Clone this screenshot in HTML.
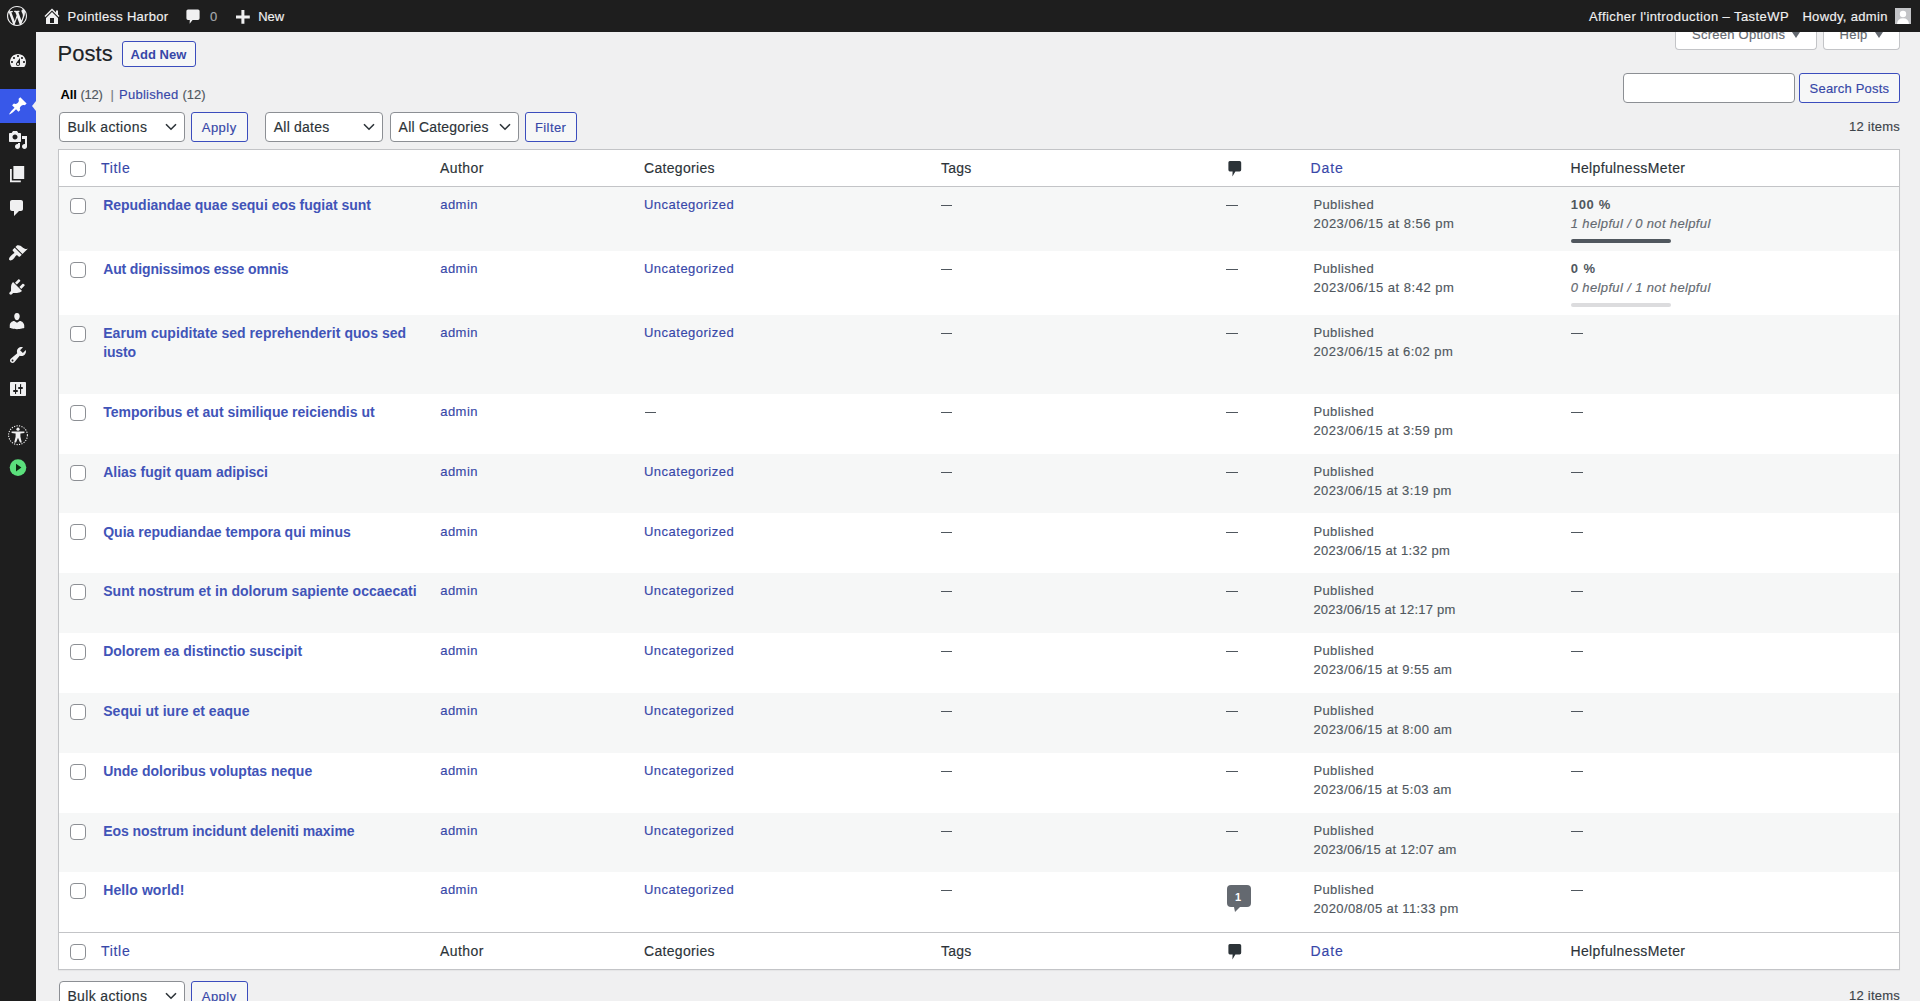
<!DOCTYPE html><html><head><meta charset="utf-8"><title>Posts</title><style>
html,body{margin:0;padding:0;width:1920px;height:1001px;overflow:hidden;background:#f0f0f1;font-family:"Liberation Sans",sans-serif}
span{white-space:pre;-webkit-text-stroke:0.15px currentColor}span.b{-webkit-text-stroke:0}
</style></head><body>
<div style="position:absolute;left:0;top:0;width:1920px;height:32px;background:#1e1e1e;z-index:5"></div>
<svg style="position:absolute;left:7px;top:6px;z-index:6" width="20" height="20" viewBox="0 0 20 20"><path fill="#f0f0f1" d="M20 10c0-5.51-4.49-10-10-10C4.48 0 0 4.49 0 10c0 5.52 4.48 10 10 10 5.51 0 10-4.48 10-10zM7.780 15.37L4.37 6.22c.55-.02 1.170-.08 1.17-.08.5-.06.44-1.13-.06-1.11 0 0-1.45.11-2.37.11-.18 0-.37 0-.58-.01C4.12 2.69 6.87 1.11 10 1.11c2.33 0 4.45.87 6.05 2.34-.68-.11-1.65.39-1.65 1.58 0 .74.45 1.36.9 2.1.35.61.55 1.36.55 2.46 0 1.49-1.4 5-1.4 5l-3.03-8.37c.54-.02.82-.17.82-.17.5-.05.44-1.25-.06-1.22 0 0-1.44.12-2.38.12-.87 0-2.33-.12-2.33-.12-.5-.03-.56 1.2-.06 1.22l.92.08 1.26 3.41zM17.410 10c.24-.64.74-1.87.43-4.25.7 1.29 1.05 2.71 1.05 4.25 0 3.29-1.73 6.24-4.4 7.78.97-2.59 1.94-5.2 2.92-7.780zM6.1 18.09C3.12 16.65 1.11 13.53 1.11 10c0-1.3.23-2.48.72-3.59C3.25 10.3 4.67 14.2 6.1 18.09zm4.03-6.63l2.58 6.98c-.86.29-1.76.45-2.71.45-.79 0-1.57-.11-2.29-.33.81-2.38 1.62-4.74 2.42-7.1z"/></svg>
<svg style="position:absolute;left:42px;top:6.1px;z-index:6" width="20" height="20" viewBox="0 0 20 20"><path fill="#f0f0f1" d="M16 8.5l1.53 1.53-1.06 1.06L10 4.62l-6.47 6.47-1.06-1.06L10 2.5l4 4v-2h2v4zm-6-2.46l6 5.99V18H4v-5.97zM12 17v-5H8v5h4z"/></svg>
<svg style="position:absolute;left:186px;top:9px;z-index:6" width="14" height="16" viewBox="0 0 14 16">
<path fill="#f0f0f1" d="M2 0.5 H12 Q13.6 0.5 13.6 2.1 V9.3 Q13.6 10.9 12 10.9 H6.6 L3.6 14.8 L3.8 10.9 H2 Q0.4 10.9 0.4 9.3 V2.1 Q0.4 0.5 2 0.5 Z"/>
</svg>
<svg style="position:absolute;left:236px;top:10px;z-index:6" width="14" height="14" viewBox="0 0 14 14">
<path fill="#f0f0f1" d="M5.4 0 H8.4 V5.4 H13.8 V8.4 H8.4 V13.8 H5.4 V8.4 H0 V5.4 H5.4 Z"/>
</svg>
<svg style="position:absolute;left:1895px;top:8px;z-index:6" width="16" height="16" viewBox="0 0 16 16">
<rect width="16" height="16" fill="#c3c4c7"/>
<circle cx="8" cy="6" r="3.2" fill="#fff"/>
<path fill="#fff" d="M2 16 Q2.5 10.2 8 10.2 Q13.5 10.2 14 16 Z"/>
</svg>
<div style="position:absolute;left:0;top:32px;width:36px;height:969px;background:#1e1e1e"></div>
<div style="position:absolute;left:0;top:89px;width:36px;height:34px;background:#3858e9"></div>
<div style="position:absolute;left:32px;top:101px;width:0;height:0;border-top:5px solid transparent;border-bottom:5px solid transparent;border-right:4px solid #f0f0f1"></div>
<svg style="position:absolute;left:7.6px;top:50.8px" width="20" height="20" viewBox="0 0 20 20"><path fill="#f0f0f1" d="M3.76 16h12.48c1.1-1.37 1.76-3.11 1.76-5 0-4.42-3.58-8-8-8s-8 3.58-8 8c0 1.89.66 3.63 1.76 5zM10 4c.55 0 1 .45 1 1s-.45 1-1 1-1-.45-1-1 .45-1 1-1zM6 6c.55 0 1 .45 1 1s-.45 1-1 1-1-.45-1-1 .45-1 1-1zm8 0c.55 0 1 .45 1 1s-.45 1-1 1-1-.45-1-1 .45-1 1-1zm-5.37 5.55L12 7v6c0 1.1-.9 2-2 2s-2-.9-2-2c0-.57.24-1.08.63-1.45zM4 10c.55 0 1 .45 1 1s-.45 1-1 1-1-.45-1-1 .45-1 1-1zm12 0c.55 0 1 .45 1 1s-.45 1-1 1-1-.45-1-1 .45-1 1-1zm-5 3c0-.55-.45-1-1-1s-1 .45-1 1 .45 1 1 1 1-.45 1-1z"/></svg><svg style="position:absolute;left:7.8px;top:96px" width="20" height="20" viewBox="0 0 20 20"><path fill="#fff" d="M10.44 3.02l1.82-1.82 6.36 6.35-1.83 1.82c-1.05-.68-2.48-.57-3.41.36l-.75.75c-.92.93-1.040 2.35-.35 3.41l-1.83 1.82-2.41-2.41-2.8 2.79c-.42.42-3.38 2.71-3.8 2.29s1.86-3.39 2.28-3.810l2.79-2.79L4.1 9.36l1.83-1.82c1.05.69 2.48.57 3.4-.36l.75-.75c.93-.92 1.05-2.35.36-3.41z"/></svg><svg style="position:absolute;left:7.6px;top:129.8px" width="20" height="20" viewBox="0 0 20 20"><path fill="#f0f0f1" d="M13 11V4c0-.55-.45-1-1-1h-1.67L9 1H5L3.67 3H2c-.55 0-1 .45-1 1v7c0 .55.45 1 1 1h10c.55 0 1-.45 1-1zM7 4.5c1.38 0 2.5 1.12 2.5 2.5S8.38 9.5 7 9.5 4.5 8.38 4.5 7 5.62 4.5 7 4.5zM14 6h5v10.5c0 1.38-1.12 2.5-2.5 2.5S14 17.88 14 16.5s1.120-2.5 2.5-2.5c.17 0 .34.02.5.05V9h-3V6zm-4 8.05V13h2v3.5c0 1.38-1.12 2.5-2.5 2.5S7 17.88 7 16.5 8.12 14 9.5 14c.17 0 .34.02.5.05z"/></svg><svg style="position:absolute;left:0;top:160px" width="36" height="30" viewBox="0 160 36 30"><path fill="#f0f0f1" d="M13.4 166 H24.2 V179 H13.4 Z M10 169 H11.8 V180.4 H20.8 V182.2 H10 Z"/></svg><svg style="position:absolute;left:7.2px;top:198px" width="20" height="20" viewBox="0 0 20 20"><path fill="#f0f0f1" d="M5 2h9c1.1 0 2 .9 2 2v7c0 1.1-.9 2-2 2h-2l-5 5v-5H5c-1.1 0-2-.9-2-2V4c0-1.1.9-2 2-2z"/></svg><svg style="position:absolute;left:7.5px;top:242.8px" width="20" height="20" viewBox="0 0 20 20"><path fill="#f0f0f1" d="M14.48 11.06L7.41 3.99l1.5-1.5c.5-.56 2.3-.47 3.51.32 1.21.8 1.43 1.28 2.91 2.1 1.18.64 2.45 1.26 4.450.85zm-.71.71L6.7 4.7 4.93 6.47c-.39.39-.39 1.02 0 1.41l1.06 1.06c.39.39.39 1.03 0 1.42-.6.6-1.43 1.11-2.21 1.69-.35.26-.7.53-1.01.84C1.43 14.23.4 16.08 1.4 17.07c.99 1 2.84-.03 4.18-1.36.31-.31.58-.66.85-1.02.57-.78 1.08-1.61 1.69-2.210.39-.39 1.02-.39 1.41 0l1.06 1.06c.39.39 1.02.39 1.41 0z"/></svg><svg style="position:absolute;left:7.4px;top:276.8px" width="20" height="20" viewBox="0 0 20 20"><path fill="#f0f0f1" d="M13.11 4.36L9.87 7.6 8 5.73l3.24-3.24c.35-.34 1.05-.2 1.56.32.52.51.66 1.21.31 1.55zm-8 1.77l.91-1.12 9.01 9.01-1.19.84c-.71.71-2.63 1.160-3.82 1.16H6.14L4.9 17.26c-.59.59-1.54.59-2.12 0-.59-.58-.59-1.53 0-2.12l1.24-1.24v-3.88c0-1.13.4-3.19 1.09-3.89zm7.26 3.97l3.24-3.24c.34-.35 1.04-.21 1.55.31.52.51.66 1.21.31 1.55l-3.24 3.25z"/></svg><svg style="position:absolute;left:7.3px;top:311px" width="20" height="20" viewBox="0 0 20 20"><path fill="#f0f0f1" d="M10 9.25c-2.27 0-2.73-3.44-2.73-3.44C7 4.02 7.82 2 9.97 2c2.16 0 2.98 2.02 2.71 3.81 0 0-.41 3.44-2.68 3.44zm0 2.57L12.72 10c2.39 0 4.52 2.33 4.52 4.53v2.49s-3.65 1.13-7.24 1.13c-3.65 0-7.24-1.13-7.24-1.13v-2.49c0-2.25 1.94-4.48 4.47-4.48z"/></svg><svg style="position:absolute;left:7.6px;top:345px" width="20" height="20" viewBox="0 0 20 20"><path fill="#f0f0f1" d="M16.68 9.77c-1.34 1.34-3.3 1.67-4.95.99l-5.41 6.52c-.99.99-2.59.99-3.58 0s-.99-2.59 0-3.57l6.52-5.42c-.68-1.65-.35-3.61.99-4.95 1.28-1.28 3.12-1.62 4.72-1.06l-2.89 2.89 2.82 2.82 2.86-2.87c.53 1.58.18 3.39-1.08 4.65zM3.81 16.21c.4.39 1.04.39 1.43 0 .4-.4.4-1.04 0-1.43-.39-.4-1.030-.4-1.43 0-.39.39-.39 1.03 0 1.43z"/></svg><svg style="position:absolute;left:7.9px;top:379px" width="20" height="20" viewBox="0 0 20 20"><rect x="2" y="3" width="16" height="14" rx="0.8" fill="#f0f0f1"/><g fill="#1e1e1e"><rect x="7" y="5" width="1.1" height="10" rx="0.5"/><rect x="12" y="5" width="1.1" height="10" rx="0.5"/><rect x="5" y="11" width="5" height="2" rx="1"/><rect x="10" y="8" width="5" height="2" rx="1"/></g></svg><svg style="position:absolute;left:0;top:418px" width="36" height="66" viewBox="0 418 36 66">
 <circle cx="18" cy="435.2" r="9.4" fill="none" stroke="#f0f0f1" stroke-width="1.1" stroke-dasharray="1.2 1.3"/>
 <circle cx="18" cy="429.2" r="1.6" fill="#f0f0f1"/>
 <path fill="#f0f0f1" d="M11.6 431.4 H24.4 V433 L20.4 433.6 L20.4 436.8 L21.8 442.4 L20 442.4 L18 437.8 L16 442.4 L14.2 442.4 L15.6 436.8 L15.6 433.6 L11.6 433 Z"/>
 <circle cx="18" cy="467.6" r="8.3" fill="#5be07c"/>
 <path fill="#0d2a12" d="M16 463.8 L21.4 467.6 L16 471.4 Z"/>
</svg>
<div style="position:absolute;left:122px;top:41px;width:74px;height:26px;box-sizing:border-box;border:1px solid #3b4dbd;border-radius:3px;background:#f6f7f7"></div>
<div style="position:absolute;left:1675px;top:20px;width:142px;height:30px;box-sizing:border-box;border:1px solid #c3c4c7;border-top:none;border-radius:0 0 4px 4px;background:#fff"></div>
<div style="position:absolute;left:1823px;top:20px;width:77px;height:30px;box-sizing:border-box;border:1px solid #c3c4c7;border-top:none;border-radius:0 0 4px 4px;background:#fff"></div>
<div style="position:absolute;left:1792px;top:32px;width:0;height:0;border-left:4px solid transparent;border-right:4px solid transparent;border-top:6px solid #646970"></div>
<div style="position:absolute;left:1875px;top:32px;width:0;height:0;border-left:4px solid transparent;border-right:4px solid transparent;border-top:6px solid #646970"></div>
<div style="position:absolute;left:1623px;top:73px;width:172px;height:30px;box-sizing:border-box;border:1px solid #8c8f94;border-radius:4px;background:#fff"></div>
<div style="position:absolute;left:1799px;top:73px;width:101px;height:30px;box-sizing:border-box;border:1px solid #3b4dbd;border-radius:3px;background:#f6f7f7"></div>
<div style="position:absolute;left:59px;top:112px;width:126px;height:30px;box-sizing:border-box;border:1px solid #8c8f94;border-radius:4px;background:#fff"></div>
<svg style="position:absolute;left:165px;top:123px" width="12" height="8" viewBox="0 0 12 8"><path d="M1 1.2 L6 6.2 L11 1.2" fill="none" stroke="#2c3338" stroke-width="1.6"/></svg>
<div style="position:absolute;left:191px;top:112px;width:57px;height:30px;box-sizing:border-box;border:1px solid #3b4dbd;border-radius:3px;background:#f6f7f7"></div>
<div style="position:absolute;left:265px;top:112px;width:118px;height:30px;box-sizing:border-box;border:1px solid #8c8f94;border-radius:4px;background:#fff"></div>
<svg style="position:absolute;left:363px;top:123px" width="12" height="8" viewBox="0 0 12 8"><path d="M1 1.2 L6 6.2 L11 1.2" fill="none" stroke="#2c3338" stroke-width="1.6"/></svg>
<div style="position:absolute;left:390px;top:112px;width:129px;height:30px;box-sizing:border-box;border:1px solid #8c8f94;border-radius:4px;background:#fff"></div>
<svg style="position:absolute;left:499px;top:123px" width="12" height="8" viewBox="0 0 12 8"><path d="M1 1.2 L6 6.2 L11 1.2" fill="none" stroke="#2c3338" stroke-width="1.6"/></svg>
<div style="position:absolute;left:525px;top:112px;width:52px;height:30px;box-sizing:border-box;border:1px solid #3b4dbd;border-radius:3px;background:#f6f7f7"></div>
<div style="position:absolute;left:58px;top:149px;width:1842px;height:821px;box-sizing:border-box;border:1px solid #c3c4c7;background:#fff;box-shadow:0 1px 1px rgba(0,0,0,.04)"></div>
<div style="position:absolute;left:59px;top:186px;width:1840px;height:1px;background:#c3c4c7"></div>
<div style="position:absolute;left:59px;top:932px;width:1840px;height:1px;background:#c3c4c7"></div>
<div style="position:absolute;left:70px;top:161px;width:16px;height:16px;box-sizing:border-box;border:1px solid #8c8f94;border-radius:4px;background:#fff"></div>
<svg style="position:absolute;left:1228px;top:160px" width="14" height="17" viewBox="0 0 14 17"><path fill="#2c3338" d="M1.8 1 H11.6 Q13.2 1 13.2 2.6 V9.8 Q13.2 11.4 11.6 11.4 H7.4 L4.4 16.6 L4.6 11.4 H1.8 Q0.4 11.4 0.4 9.8 V2.6 Q0.4 1 1.8 1 Z"/></svg>
<div style="position:absolute;left:70px;top:944px;width:16px;height:16px;box-sizing:border-box;border:1px solid #8c8f94;border-radius:4px;background:#fff"></div>
<svg style="position:absolute;left:1228px;top:943px" width="14" height="17" viewBox="0 0 14 17"><path fill="#2c3338" d="M1.8 1 H11.6 Q13.2 1 13.2 2.6 V9.8 Q13.2 11.4 11.6 11.4 H7.4 L4.4 16.6 L4.6 11.4 H1.8 Q0.4 11.4 0.4 9.8 V2.6 Q0.4 1 1.8 1 Z"/></svg>
<div style="position:absolute;left:59px;top:187px;width:1840px;height:64px;background:#f6f7f7"></div>
<div style="position:absolute;left:70px;top:198px;width:16px;height:16px;box-sizing:border-box;border:1px solid #8c8f94;border-radius:4px;background:#fff"></div>
<div style="position:absolute;left:940.6px;top:204.6px;width:11.4px;height:1.2px;background:#50575e"></div>
<div style="position:absolute;left:1226.4px;top:204.6px;width:11.4px;height:1.2px;background:#50575e"></div>
<div style="position:absolute;left:1571px;top:239px;width:100px;height:4px;border-radius:2px;background:#50575e"></div>
<div style="position:absolute;left:70px;top:262px;width:16px;height:16px;box-sizing:border-box;border:1px solid #8c8f94;border-radius:4px;background:#fff"></div>
<div style="position:absolute;left:940.6px;top:268.6px;width:11.4px;height:1.2px;background:#50575e"></div>
<div style="position:absolute;left:1226.4px;top:268.6px;width:11.4px;height:1.2px;background:#50575e"></div>
<div style="position:absolute;left:1571px;top:303px;width:100px;height:4px;border-radius:2px;background:#dcdcde"></div>
<div style="position:absolute;left:59px;top:315px;width:1840px;height:79px;background:#f6f7f7"></div>
<div style="position:absolute;left:70px;top:326px;width:16px;height:16px;box-sizing:border-box;border:1px solid #8c8f94;border-radius:4px;background:#fff"></div>
<div style="position:absolute;left:940.6px;top:332.6px;width:11.4px;height:1.2px;background:#50575e"></div>
<div style="position:absolute;left:1226.4px;top:332.6px;width:11.4px;height:1.2px;background:#50575e"></div>
<div style="position:absolute;left:1571.4px;top:332.6px;width:11.4px;height:1.2px;background:#50575e"></div>
<div style="position:absolute;left:70px;top:405px;width:16px;height:16px;box-sizing:border-box;border:1px solid #8c8f94;border-radius:4px;background:#fff"></div>
<div style="position:absolute;left:645px;top:411.6px;width:11.4px;height:1.2px;background:#50575e"></div>
<div style="position:absolute;left:940.6px;top:411.6px;width:11.4px;height:1.2px;background:#50575e"></div>
<div style="position:absolute;left:1226.4px;top:411.6px;width:11.4px;height:1.2px;background:#50575e"></div>
<div style="position:absolute;left:1571.4px;top:411.6px;width:11.4px;height:1.2px;background:#50575e"></div>
<div style="position:absolute;left:59px;top:454px;width:1840px;height:59px;background:#f6f7f7"></div>
<div style="position:absolute;left:70px;top:465px;width:16px;height:16px;box-sizing:border-box;border:1px solid #8c8f94;border-radius:4px;background:#fff"></div>
<div style="position:absolute;left:940.6px;top:471.6px;width:11.4px;height:1.2px;background:#50575e"></div>
<div style="position:absolute;left:1226.4px;top:471.6px;width:11.4px;height:1.2px;background:#50575e"></div>
<div style="position:absolute;left:1571.4px;top:471.6px;width:11.4px;height:1.2px;background:#50575e"></div>
<div style="position:absolute;left:70px;top:524px;width:16px;height:16px;box-sizing:border-box;border:1px solid #8c8f94;border-radius:4px;background:#fff"></div>
<div style="position:absolute;left:940.6px;top:531.6px;width:11.4px;height:1.2px;background:#50575e"></div>
<div style="position:absolute;left:1226.4px;top:531.6px;width:11.4px;height:1.2px;background:#50575e"></div>
<div style="position:absolute;left:1571.4px;top:531.6px;width:11.4px;height:1.2px;background:#50575e"></div>
<div style="position:absolute;left:59px;top:573px;width:1840px;height:60px;background:#f6f7f7"></div>
<div style="position:absolute;left:70px;top:584px;width:16px;height:16px;box-sizing:border-box;border:1px solid #8c8f94;border-radius:4px;background:#fff"></div>
<div style="position:absolute;left:940.6px;top:591.1px;width:11.4px;height:1.2px;background:#50575e"></div>
<div style="position:absolute;left:1226.4px;top:591.1px;width:11.4px;height:1.2px;background:#50575e"></div>
<div style="position:absolute;left:1571.4px;top:591.1px;width:11.4px;height:1.2px;background:#50575e"></div>
<div style="position:absolute;left:70px;top:644px;width:16px;height:16px;box-sizing:border-box;border:1px solid #8c8f94;border-radius:4px;background:#fff"></div>
<div style="position:absolute;left:940.6px;top:651.1px;width:11.4px;height:1.2px;background:#50575e"></div>
<div style="position:absolute;left:1226.4px;top:651.1px;width:11.4px;height:1.2px;background:#50575e"></div>
<div style="position:absolute;left:1571.4px;top:651.1px;width:11.4px;height:1.2px;background:#50575e"></div>
<div style="position:absolute;left:59px;top:693px;width:1840px;height:60px;background:#f6f7f7"></div>
<div style="position:absolute;left:70px;top:704px;width:16px;height:16px;box-sizing:border-box;border:1px solid #8c8f94;border-radius:4px;background:#fff"></div>
<div style="position:absolute;left:940.6px;top:710.6px;width:11.4px;height:1.2px;background:#50575e"></div>
<div style="position:absolute;left:1226.4px;top:710.6px;width:11.4px;height:1.2px;background:#50575e"></div>
<div style="position:absolute;left:1571.4px;top:710.6px;width:11.4px;height:1.2px;background:#50575e"></div>
<div style="position:absolute;left:70px;top:764px;width:16px;height:16px;box-sizing:border-box;border:1px solid #8c8f94;border-radius:4px;background:#fff"></div>
<div style="position:absolute;left:940.6px;top:771.1px;width:11.4px;height:1.2px;background:#50575e"></div>
<div style="position:absolute;left:1226.4px;top:771.1px;width:11.4px;height:1.2px;background:#50575e"></div>
<div style="position:absolute;left:1571.4px;top:771.1px;width:11.4px;height:1.2px;background:#50575e"></div>
<div style="position:absolute;left:59px;top:813px;width:1840px;height:59px;background:#f6f7f7"></div>
<div style="position:absolute;left:70px;top:824px;width:16px;height:16px;box-sizing:border-box;border:1px solid #8c8f94;border-radius:4px;background:#fff"></div>
<div style="position:absolute;left:940.6px;top:831.1px;width:11.4px;height:1.2px;background:#50575e"></div>
<div style="position:absolute;left:1226.4px;top:831.1px;width:11.4px;height:1.2px;background:#50575e"></div>
<div style="position:absolute;left:1571.4px;top:831.1px;width:11.4px;height:1.2px;background:#50575e"></div>
<div style="position:absolute;left:70px;top:883px;width:16px;height:16px;box-sizing:border-box;border:1px solid #8c8f94;border-radius:4px;background:#fff"></div>
<div style="position:absolute;left:940.6px;top:890.1px;width:11.4px;height:1.2px;background:#50575e"></div>
<div style="position:absolute;left:1227px;top:885.0px;width:24px;height:22px;background:#646970;border-radius:4px"></div>
<div style="position:absolute;left:1234px;top:907.0px;width:0;height:0;border-top:5px solid #646970;border-left:1px solid transparent;border-right:5px solid transparent"></div>
<div style="position:absolute;left:1571.4px;top:890.1px;width:11.4px;height:1.2px;background:#50575e"></div>
<div style="position:absolute;left:59px;top:981px;width:126px;height:30px;box-sizing:border-box;border:1px solid #8c8f94;border-radius:4px;background:#fff"></div>
<svg style="position:absolute;left:165px;top:992px" width="12" height="8" viewBox="0 0 12 8"><path d="M1 1.2 L6 6.2 L11 1.2" fill="none" stroke="#2c3338" stroke-width="1.6"/></svg>
<div style="position:absolute;left:191px;top:981px;width:57px;height:30px;box-sizing:border-box;border:1px solid #3b4dbd;border-radius:3px;background:#f6f7f7"></div>
<span style="position:absolute;left:67.6px;top:7px;line-height:20px;font-size:13px;font-weight:400;font-style:normal;color:#f0f0f1;letter-spacing:0.296px;z-index:6">Pointless Harbor</span>
<span style="position:absolute;left:210px;top:7px;line-height:20px;font-size:13px;font-weight:400;font-style:normal;color:#a7aaad;letter-spacing:0px;z-index:6">0</span>
<span style="position:absolute;left:258.2px;top:7px;line-height:20px;font-size:13px;font-weight:400;font-style:normal;color:#f0f0f1;letter-spacing:-0.078px;z-index:6">New</span>
<span style="position:absolute;left:1589px;top:7px;line-height:20px;font-size:13px;font-weight:400;font-style:normal;color:#f0f0f1;letter-spacing:0.416px;z-index:6">Afficher l&#x27;introduction – TasteWP</span>
<span style="position:absolute;left:1802.4px;top:7px;line-height:20px;font-size:13px;font-weight:400;font-style:normal;color:#f0f0f1;letter-spacing:0.332px;z-index:6">Howdy, admin</span>
<span style="position:absolute;left:57.4px;top:43.5px;line-height:20px;font-size:22px;font-weight:400;font-style:normal;color:#1d2327;letter-spacing:0.077px">Posts</span>
<span class=b style="position:absolute;left:130.5px;top:45px;line-height:20px;font-size:13px;font-weight:700;font-style:normal;color:#3747a8;letter-spacing:0.023px">Add New</span>
<span style="position:absolute;left:1692.0px;top:25px;line-height:20px;font-size:13px;font-weight:400;font-style:normal;color:#646970;letter-spacing:0.259px">Screen Options</span>
<span style="position:absolute;left:1839.6px;top:25px;line-height:20px;font-size:13px;font-weight:400;font-style:normal;color:#646970;letter-spacing:0.336px">Help</span>
<span class=b style="position:absolute;left:60.6px;top:85px;line-height:20px;font-size:13px;font-weight:700;font-style:normal;color:#000;letter-spacing:-0.233px">All</span>
<span style="position:absolute;left:80.4px;top:85px;line-height:20px;font-size:13px;font-weight:400;font-style:normal;color:#50575e;letter-spacing:-0.222px">(12)</span>
<span style="position:absolute;left:110.4px;top:85px;line-height:20px;font-size:13px;font-weight:400;font-style:normal;color:#787c82;letter-spacing:0px">|</span>
<span style="position:absolute;left:119px;top:85px;line-height:20px;font-size:13px;font-weight:400;font-style:normal;color:#3747a8;letter-spacing:0.268px">Published</span>
<span style="position:absolute;left:182.5px;top:85px;line-height:20px;font-size:13px;font-weight:400;font-style:normal;color:#50575e;letter-spacing:-0.005px">(12)</span>
<span style="position:absolute;left:1809.6px;top:79px;line-height:20px;font-size:13px;font-weight:400;font-style:normal;color:#3747a8;letter-spacing:0.193px">Search Posts</span>
<span style="position:absolute;left:67.4px;top:116.5px;line-height:20px;font-size:14px;font-weight:400;font-style:normal;color:#2c3338;letter-spacing:0.364px">Bulk actions</span>
<span style="position:absolute;left:201.8px;top:118px;line-height:20px;font-size:13px;font-weight:400;font-style:normal;color:#3747a8;letter-spacing:0.457px">Apply</span>
<span style="position:absolute;left:273.8px;top:116.5px;line-height:20px;font-size:14px;font-weight:400;font-style:normal;color:#2c3338;letter-spacing:0.209px">All dates</span>
<span style="position:absolute;left:398.6px;top:116.5px;line-height:20px;font-size:14px;font-weight:400;font-style:normal;color:#2c3338;letter-spacing:0.21px">All Categories</span>
<span style="position:absolute;left:535px;top:118px;line-height:20px;font-size:13px;font-weight:400;font-style:normal;color:#3747a8;letter-spacing:0.394px">Filter</span>
<span style="position:absolute;left:1849px;top:117px;line-height:20px;font-size:13px;font-weight:400;font-style:normal;color:#3c434a;letter-spacing:0.231px">12 items</span>
<span style="position:absolute;left:101px;top:158.4px;line-height:20px;font-size:14px;font-weight:400;font-style:normal;color:#3747a8;letter-spacing:0.686px">Title</span>
<span style="position:absolute;left:440.0px;top:158.4px;line-height:20px;font-size:14px;font-weight:400;font-style:normal;color:#2c3338;letter-spacing:0.426px">Author</span>
<span style="position:absolute;left:644px;top:158.4px;line-height:20px;font-size:14px;font-weight:400;font-style:normal;color:#2c3338;letter-spacing:0.309px">Categories</span>
<span style="position:absolute;left:941px;top:158.4px;line-height:20px;font-size:14px;font-weight:400;font-style:normal;color:#2c3338;letter-spacing:0.201px">Tags</span>
<span style="position:absolute;left:1310.6px;top:158.4px;line-height:20px;font-size:14px;font-weight:400;font-style:normal;color:#3747a8;letter-spacing:0.901px">Date</span>
<span style="position:absolute;left:1570.4px;top:158.4px;line-height:20px;font-size:14px;font-weight:400;font-style:normal;color:#2c3338;letter-spacing:0.376px">HelpfulnessMeter</span>
<span style="position:absolute;left:101px;top:940.6px;line-height:20px;font-size:14px;font-weight:400;font-style:normal;color:#3747a8;letter-spacing:0.686px">Title</span>
<span style="position:absolute;left:440.0px;top:940.6px;line-height:20px;font-size:14px;font-weight:400;font-style:normal;color:#2c3338;letter-spacing:0.426px">Author</span>
<span style="position:absolute;left:644px;top:940.6px;line-height:20px;font-size:14px;font-weight:400;font-style:normal;color:#2c3338;letter-spacing:0.309px">Categories</span>
<span style="position:absolute;left:941px;top:940.6px;line-height:20px;font-size:14px;font-weight:400;font-style:normal;color:#2c3338;letter-spacing:0.201px">Tags</span>
<span style="position:absolute;left:1310.6px;top:940.6px;line-height:20px;font-size:14px;font-weight:400;font-style:normal;color:#3747a8;letter-spacing:0.901px">Date</span>
<span style="position:absolute;left:1570.4px;top:940.6px;line-height:20px;font-size:14px;font-weight:400;font-style:normal;color:#2c3338;letter-spacing:0.376px">HelpfulnessMeter</span>
<span class=b style="position:absolute;left:103.2px;top:194.7px;line-height:20px;font-size:14px;font-weight:700;font-style:normal;color:#4154b8;letter-spacing:-0.016px">Repudiandae quae sequi eos fugiat sunt</span>
<span style="position:absolute;left:440.2px;top:194.6px;line-height:20px;font-size:13px;font-weight:400;font-style:normal;color:#3747a8;letter-spacing:0.485px">admin</span>
<span style="position:absolute;left:644px;top:194.6px;line-height:20px;font-size:13px;font-weight:400;font-style:normal;color:#3747a8;letter-spacing:0.486px">Uncategorized</span>
<span style="position:absolute;left:1313.4px;top:194.6px;line-height:20px;font-size:13px;font-weight:400;font-style:normal;color:#50575e;letter-spacing:0.406px">Published</span>
<span style="position:absolute;left:1313.4px;top:213.8px;line-height:20px;font-size:13px;font-weight:400;font-style:normal;color:#50575e;letter-spacing:0.513px">2023/06/15 at 8:56 pm</span>
<span class=b style="position:absolute;left:1570.8px;top:195px;line-height:20px;font-size:13px;font-weight:700;font-style:normal;color:#50575e;letter-spacing:0.671px">100 %</span>
<span style="position:absolute;left:1570.8px;top:214px;line-height:20px;font-size:13px;font-weight:400;font-style:italic;color:#646970;letter-spacing:0.363px">1 helpful / 0 not helpful</span>
<span class=b style="position:absolute;left:103.2px;top:258.7px;line-height:20px;font-size:14px;font-weight:700;font-style:normal;color:#4154b8;letter-spacing:-0.143px">Aut dignissimos esse omnis</span>
<span style="position:absolute;left:440.2px;top:258.6px;line-height:20px;font-size:13px;font-weight:400;font-style:normal;color:#3747a8;letter-spacing:0.485px">admin</span>
<span style="position:absolute;left:644px;top:258.6px;line-height:20px;font-size:13px;font-weight:400;font-style:normal;color:#3747a8;letter-spacing:0.486px">Uncategorized</span>
<span style="position:absolute;left:1313.4px;top:258.6px;line-height:20px;font-size:13px;font-weight:400;font-style:normal;color:#50575e;letter-spacing:0.406px">Published</span>
<span style="position:absolute;left:1313.4px;top:277.8px;line-height:20px;font-size:13px;font-weight:400;font-style:normal;color:#50575e;letter-spacing:0.523px">2023/06/15 at 8:42 pm</span>
<span class=b style="position:absolute;left:1570.8px;top:259px;line-height:20px;font-size:13px;font-weight:700;font-style:normal;color:#50575e;letter-spacing:0.977px">0 %</span>
<span style="position:absolute;left:1570.8px;top:278px;line-height:20px;font-size:13px;font-weight:400;font-style:italic;color:#646970;letter-spacing:0.363px">0 helpful / 1 not helpful</span>
<span class=b style="position:absolute;left:103.2px;top:322.7px;line-height:20px;font-size:14px;font-weight:700;font-style:normal;color:#4154b8;letter-spacing:0.045px">Earum cupiditate sed reprehenderit quos sed</span>
<span class=b style="position:absolute;left:103.2px;top:341.7px;line-height:20px;font-size:14px;font-weight:700;font-style:normal;color:#4154b8;letter-spacing:-0.143px">iusto</span>
<span style="position:absolute;left:440.2px;top:322.6px;line-height:20px;font-size:13px;font-weight:400;font-style:normal;color:#3747a8;letter-spacing:0.485px">admin</span>
<span style="position:absolute;left:644px;top:322.6px;line-height:20px;font-size:13px;font-weight:400;font-style:normal;color:#3747a8;letter-spacing:0.486px">Uncategorized</span>
<span style="position:absolute;left:1313.4px;top:322.6px;line-height:20px;font-size:13px;font-weight:400;font-style:normal;color:#50575e;letter-spacing:0.406px">Published</span>
<span style="position:absolute;left:1313.4px;top:341.8px;line-height:20px;font-size:13px;font-weight:400;font-style:normal;color:#50575e;letter-spacing:0.468px">2023/06/15 at 6:02 pm</span>
<span class=b style="position:absolute;left:103.2px;top:401.7px;line-height:20px;font-size:14px;font-weight:700;font-style:normal;color:#4154b8;letter-spacing:0.006px">Temporibus et aut similique reiciendis ut</span>
<span style="position:absolute;left:440.2px;top:401.6px;line-height:20px;font-size:13px;font-weight:400;font-style:normal;color:#3747a8;letter-spacing:0.485px">admin</span>
<span style="position:absolute;left:1313.4px;top:401.6px;line-height:20px;font-size:13px;font-weight:400;font-style:normal;color:#50575e;letter-spacing:0.406px">Published</span>
<span style="position:absolute;left:1313.4px;top:420.8px;line-height:20px;font-size:13px;font-weight:400;font-style:normal;color:#50575e;letter-spacing:0.468px">2023/06/15 at 3:59 pm</span>
<span class=b style="position:absolute;left:103.2px;top:461.7px;line-height:20px;font-size:14px;font-weight:700;font-style:normal;color:#4154b8;letter-spacing:-0.005px">Alias fugit quam adipisci</span>
<span style="position:absolute;left:440.2px;top:461.6px;line-height:20px;font-size:13px;font-weight:400;font-style:normal;color:#3747a8;letter-spacing:0.485px">admin</span>
<span style="position:absolute;left:644px;top:461.6px;line-height:20px;font-size:13px;font-weight:400;font-style:normal;color:#3747a8;letter-spacing:0.486px">Uncategorized</span>
<span style="position:absolute;left:1313.4px;top:461.6px;line-height:20px;font-size:13px;font-weight:400;font-style:normal;color:#50575e;letter-spacing:0.406px">Published</span>
<span style="position:absolute;left:1313.4px;top:480.8px;line-height:20px;font-size:13px;font-weight:400;font-style:normal;color:#50575e;letter-spacing:0.398px">2023/06/15 at 3:19 pm</span>
<span class=b style="position:absolute;left:103.2px;top:521.7px;line-height:20px;font-size:14px;font-weight:700;font-style:normal;color:#4154b8;letter-spacing:0.006px">Quia repudiandae tempora qui minus</span>
<span style="position:absolute;left:440.2px;top:521.6px;line-height:20px;font-size:13px;font-weight:400;font-style:normal;color:#3747a8;letter-spacing:0.485px">admin</span>
<span style="position:absolute;left:644px;top:521.6px;line-height:20px;font-size:13px;font-weight:400;font-style:normal;color:#3747a8;letter-spacing:0.486px">Uncategorized</span>
<span style="position:absolute;left:1313.4px;top:521.6px;line-height:20px;font-size:13px;font-weight:400;font-style:normal;color:#50575e;letter-spacing:0.406px">Published</span>
<span style="position:absolute;left:1313.4px;top:540.8px;line-height:20px;font-size:13px;font-weight:400;font-style:normal;color:#50575e;letter-spacing:0.318px">2023/06/15 at 1:32 pm</span>
<span class=b style="position:absolute;left:103.2px;top:581.2px;line-height:20px;font-size:14px;font-weight:700;font-style:normal;color:#4154b8;letter-spacing:0.035px">Sunt nostrum et in dolorum sapiente occaecati</span>
<span style="position:absolute;left:440.2px;top:581.1px;line-height:20px;font-size:13px;font-weight:400;font-style:normal;color:#3747a8;letter-spacing:0.485px">admin</span>
<span style="position:absolute;left:644px;top:581.1px;line-height:20px;font-size:13px;font-weight:400;font-style:normal;color:#3747a8;letter-spacing:0.486px">Uncategorized</span>
<span style="position:absolute;left:1313.4px;top:581.1px;line-height:20px;font-size:13px;font-weight:400;font-style:normal;color:#50575e;letter-spacing:0.406px">Published</span>
<span style="position:absolute;left:1313.4px;top:600.3px;line-height:20px;font-size:13px;font-weight:400;font-style:normal;color:#50575e;letter-spacing:0.219px">2023/06/15 at 12:17 pm</span>
<span class=b style="position:absolute;left:103.2px;top:641.2px;line-height:20px;font-size:14px;font-weight:700;font-style:normal;color:#4154b8;letter-spacing:-0.009px">Dolorem ea distinctio suscipit</span>
<span style="position:absolute;left:440.2px;top:641.1px;line-height:20px;font-size:13px;font-weight:400;font-style:normal;color:#3747a8;letter-spacing:0.485px">admin</span>
<span style="position:absolute;left:644px;top:641.1px;line-height:20px;font-size:13px;font-weight:400;font-style:normal;color:#3747a8;letter-spacing:0.486px">Uncategorized</span>
<span style="position:absolute;left:1313.4px;top:641.1px;line-height:20px;font-size:13px;font-weight:400;font-style:normal;color:#50575e;letter-spacing:0.406px">Published</span>
<span style="position:absolute;left:1313.4px;top:660.3px;line-height:20px;font-size:13px;font-weight:400;font-style:normal;color:#50575e;letter-spacing:0.418px">2023/06/15 at 9:55 am</span>
<span class=b style="position:absolute;left:103.2px;top:700.7px;line-height:20px;font-size:14px;font-weight:700;font-style:normal;color:#4154b8;letter-spacing:0.038px">Sequi ut iure et eaque</span>
<span style="position:absolute;left:440.2px;top:700.6px;line-height:20px;font-size:13px;font-weight:400;font-style:normal;color:#3747a8;letter-spacing:0.485px">admin</span>
<span style="position:absolute;left:644px;top:700.6px;line-height:20px;font-size:13px;font-weight:400;font-style:normal;color:#3747a8;letter-spacing:0.486px">Uncategorized</span>
<span style="position:absolute;left:1313.4px;top:700.6px;line-height:20px;font-size:13px;font-weight:400;font-style:normal;color:#50575e;letter-spacing:0.406px">Published</span>
<span style="position:absolute;left:1313.4px;top:719.8px;line-height:20px;font-size:13px;font-weight:400;font-style:normal;color:#50575e;letter-spacing:0.418px">2023/06/15 at 8:00 am</span>
<span class=b style="position:absolute;left:103.2px;top:761.2px;line-height:20px;font-size:14px;font-weight:700;font-style:normal;color:#4154b8;letter-spacing:-0.009px">Unde doloribus voluptas neque</span>
<span style="position:absolute;left:440.2px;top:761.1px;line-height:20px;font-size:13px;font-weight:400;font-style:normal;color:#3747a8;letter-spacing:0.485px">admin</span>
<span style="position:absolute;left:644px;top:761.1px;line-height:20px;font-size:13px;font-weight:400;font-style:normal;color:#3747a8;letter-spacing:0.486px">Uncategorized</span>
<span style="position:absolute;left:1313.4px;top:761.1px;line-height:20px;font-size:13px;font-weight:400;font-style:normal;color:#50575e;letter-spacing:0.406px">Published</span>
<span style="position:absolute;left:1313.4px;top:780.3px;line-height:20px;font-size:13px;font-weight:400;font-style:normal;color:#50575e;letter-spacing:0.393px">2023/06/15 at 5:03 am</span>
<span class=b style="position:absolute;left:103.2px;top:821.2px;line-height:20px;font-size:14px;font-weight:700;font-style:normal;color:#4154b8;letter-spacing:-0.041px">Eos nostrum incidunt deleniti maxime</span>
<span style="position:absolute;left:440.2px;top:821.1px;line-height:20px;font-size:13px;font-weight:400;font-style:normal;color:#3747a8;letter-spacing:0.485px">admin</span>
<span style="position:absolute;left:644px;top:821.1px;line-height:20px;font-size:13px;font-weight:400;font-style:normal;color:#3747a8;letter-spacing:0.486px">Uncategorized</span>
<span style="position:absolute;left:1313.4px;top:821.1px;line-height:20px;font-size:13px;font-weight:400;font-style:normal;color:#50575e;letter-spacing:0.406px">Published</span>
<span style="position:absolute;left:1313.4px;top:840.3px;line-height:20px;font-size:13px;font-weight:400;font-style:normal;color:#50575e;letter-spacing:0.266px">2023/06/15 at 12:07 am</span>
<span class=b style="position:absolute;left:103.2px;top:880.2px;line-height:20px;font-size:14px;font-weight:700;font-style:normal;color:#4154b8;letter-spacing:0.096px">Hello world!</span>
<span style="position:absolute;left:440.2px;top:880.1px;line-height:20px;font-size:13px;font-weight:400;font-style:normal;color:#3747a8;letter-spacing:0.485px">admin</span>
<span style="position:absolute;left:644px;top:880.1px;line-height:20px;font-size:13px;font-weight:400;font-style:normal;color:#3747a8;letter-spacing:0.486px">Uncategorized</span>
<span class=b style="position:absolute;left:1235px;top:886.5px;line-height:20px;font-size:11px;font-weight:700;font-style:normal;color:#fff;letter-spacing:0px">1</span>
<span style="position:absolute;left:1313.4px;top:880.1px;line-height:20px;font-size:13px;font-weight:400;font-style:normal;color:#50575e;letter-spacing:0.406px">Published</span>
<span style="position:absolute;left:1313.4px;top:899.3px;line-height:20px;font-size:13px;font-weight:400;font-style:normal;color:#50575e;letter-spacing:0.408px">2020/08/05 at 11:33 pm</span>
<span style="position:absolute;left:67.4px;top:985.5px;line-height:20px;font-size:14px;font-weight:400;font-style:normal;color:#2c3338;letter-spacing:0.364px">Bulk actions</span>
<span style="position:absolute;left:201.8px;top:987px;line-height:20px;font-size:13px;font-weight:400;font-style:normal;color:#3747a8;letter-spacing:0.457px">Apply</span>
<span style="position:absolute;left:1849px;top:986px;line-height:20px;font-size:13px;font-weight:400;font-style:normal;color:#3c434a;letter-spacing:0.231px">12 items</span>
</body></html>
